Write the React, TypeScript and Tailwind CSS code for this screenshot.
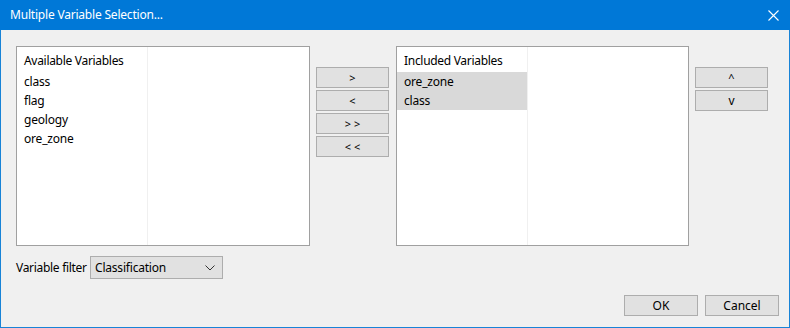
import React from 'react';

const font = { fontFamily: '"Noto Sans", "Open Sans", sans-serif' };

const available = ['class', 'flag', 'geology', 'ore_zone'];
const included = ['ore_zone', 'class'];

const Btn: React.FC<{ label: string; className?: string }> = ({ label, className }) => (
  <button className={`h-[21px] w-[73px] bg-[#e1e1e1] border border-[#adadad] text-[11px] leading-none text-black flex items-center justify-center ${className || ''}`}>
    {label}
  </button>
);

const ListBox: React.FC<{ title: string; items: string[]; selected?: boolean; width: string }> = ({ title, items, selected, width }) => (
  <div className={`${width} h-[200px] bg-white border border-[#a0a0a0] flex`}>
    <div className="w-[131px] border-r border-[#f0f0f0] flex flex-col">
      <div className="h-[25px] pl-[7px] pt-[6px] text-[12px] leading-[16px] text-black tracking-[-0.3px]">{title}</div>
      {items.map(it => (
        <div key={it} className={`h-[19px] pl-[7px] text-[12px] leading-[19px] text-black tracking-[-0.2px] ${selected ? 'bg-[#d9d9d9]' : ''}`}>{it}</div>
      ))}
    </div>
    <div className="flex-1" />
  </div>
);

export default function App() {
  return (
    <div style={font} className="w-[790px] h-[328px] border border-[#1883d7] border-t-0 bg-[#f0f0f0] flex flex-col">
      <div className="h-[30px] -mx-px bg-[#0078d7] flex items-center justify-between pl-[10px] pr-[10px]">
        <span className="text-white text-[12px] tracking-[-0.2px]">Multiple Variable Selection...</span>
        <svg width="11" height="11" viewBox="0 0 11 11" className="mr-[1px]">
          <path d="M0.5 0.5 L10.5 10.5 M10.5 0.5 L0.5 10.5" stroke="#fff" strokeWidth="1.1" />
        </svg>
      </div>
      <div className="flex-1 flex flex-col pl-[15px] pr-[10px]">
        <div className="flex mt-[16px] items-start">
          <ListBox title="Available Variables" items={available} width="w-[294px]" />
          <div className="ml-[6px] mt-[21px] flex flex-col gap-[2px]">
            <Btn label=">" />
            <Btn label="<" />
            <Btn label="> >" />
            <Btn label="< <" />
          </div>
          <ListBox title="Included Variables" items={included} selected width="w-[293px] ml-[7px]" />
          <div className="ml-[6px] mt-[21px] flex flex-col gap-[2px]">
            <Btn label="^" />
            <Btn label="v" className="text-[12px]" />
          </div>
        </div>
        <div className="flex items-center mt-[10px]">
          <span className="w-[74px] text-[12px] text-black tracking-[-0.3px] whitespace-nowrap">Variable filter</span>
          <div className="w-[133px] h-[23px] bg-[#e1e1e1] border border-[#adadad] flex items-center justify-between pl-[4px] pr-[7px]">
            <span className="text-[12px] text-black tracking-[-0.2px]">Classification</span>
            <svg width="10" height="6" viewBox="0 0 10 6">
              <path d="M0.5 0.5 L5 5 L9.5 0.5" stroke="#333" strokeWidth="1" fill="none" />
            </svg>
          </div>
        </div>
        <div className="flex justify-end gap-[7px] mt-[16px]">
          <button className="h-[21px] w-[74px] bg-[#e1e1e1] border border-[#adadad] text-[12px] text-black flex items-center justify-center">OK</button>
          <button className="h-[21px] w-[74px] bg-[#e1e1e1] border border-[#adadad] text-[12px] text-black flex items-center justify-center">Cancel</button>
        </div>
      </div>
    </div>
  );
}
